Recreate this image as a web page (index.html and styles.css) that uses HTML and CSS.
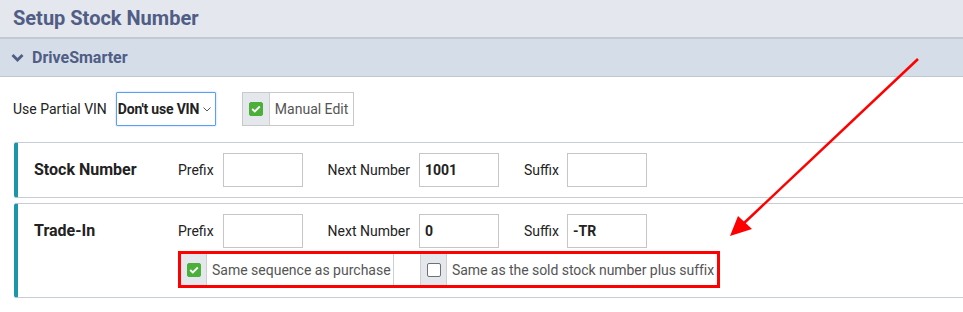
FILE: index.html
```html
<!DOCTYPE html>
<html>
<head>
<meta charset="utf-8">
<link rel="stylesheet" href="styles.css">
</head>
<body>
<div class="page">
  <div class="title">Setup Stock Number</div>
  <div class="section-head">
    <svg class="chev" width="13" height="10" viewBox="0 0 13 10"><path d="M0.5 3 L2.5 1 L6.5 5 L10.5 1 L12.5 3 L6.5 9 Z" fill="#505d85"/></svg>
    <span>DriveSmarter</span>
  </div>
  <div class="vin-row">
    <span class="lbl">Use Partial VIN</span>
    <div class="select">Don't use VIN <span class="caret"><svg width="8" height="5" viewBox="0 0 8 5"><path d="M0.5 0.5 L4 4 L7.5 0.5" fill="none" stroke="#555" stroke-width="1"/></svg></span></div>
    <div class="chk-group">
      <div class="addon"><span class="box checked"><svg width="10" height="8" viewBox="0 0 10 8"><path d="M1.2 4 L3.8 6.5 L8.8 1.5" fill="none" stroke="#fff" stroke-width="1.8"/></svg></span></div>
      <div class="chk-label">Manual Edit</div>
    </div>
  </div>
  <div class="card">
    <div class="card-title">Stock Number</div>
    <div class="fields">
      <div class="field-row">
        <span class="flbl">Prefix</span><div class="inp"></div>
        <span class="flbl nn">Next Number</span><div class="inp">1001</div>
        <span class="flbl sf">Suffix</span><div class="inp"></div>
      </div>
    </div>
  </div>
  <div class="card card2">
    <div class="card-title">Trade-In</div>
    <div class="fields">
      <div class="field-row">
        <span class="flbl">Prefix</span><div class="inp"></div>
        <span class="flbl nn">Next Number</span><div class="inp">0</div>
        <span class="flbl sf">Suffix</span><div class="inp">-TR</div>
      </div>
      <div class="opts">
        <div class="opt">
          <div class="addon"><span class="box checked"><svg width="10" height="8" viewBox="0 0 10 8"><path d="M1.2 4 L3.8 6.5 L8.8 1.5" fill="none" stroke="#fff" stroke-width="1.8"/></svg></span></div>
          <div class="chk-label wide1">Same sequence as purchase</div>
        </div>
        <div class="opt">
          <div class="addon"><span class="box"></span></div>
          <div class="chk-label last">Same as the sold stock number plus suffix</div>
        </div>
      </div>
    </div>
  </div>
  <div class="bottom-line"></div>
  <svg class="arrow" width="963" height="312" viewBox="0 0 963 312">
    <line x1="918" y1="59" x2="742" y2="225" stroke="#ff0000" stroke-width="2.5"/>
    <polygon points="730,236 738,216 752,229" fill="#ff0000"/>
  </svg>
</div>
</body>
</html>
```
FILE: styles.css
```css
* { box-sizing: border-box; }
html, body { margin: 0; padding: 0; background: #fff; }
body { font-family: Roboto, "Liberation Sans", Arial, sans-serif; color: #333; }
.page { position: relative; width: 963px; height: 312px; overflow: hidden; }
.title {
  height: 39px; background: #e4e7ed; border-bottom: 2px solid #c3c9d3;
  color: #505d85; font-weight: 700; font-size: 20px;
  padding: 6px 0 0 13px;
}
.section-head {
  height: 38px; background: #d5dde9; border-bottom: 1px solid #bfc6d1;
  display: flex; align-items: center; padding-left: 11px;
  color: #505d85; font-weight: 700; font-size: 16px;
}
.chev { margin-right: 8px; }
.vin-row {
  display: flex; align-items: center; padding: 15px 0 0 13px; height: 49px;
}
.lbl { font-size: 14px; color: #222; margin-right: 9px; white-space: nowrap; }
.select {
  width: 100px; height: 34px; border: 1px solid #5aa0f0; border-radius: 1px;
  box-shadow: 0 0 2px rgba(80,150,240,0.5);
  display: flex; align-items: center; padding-left: 1px;
  font-size: 14px; font-weight: 700; color: #222; white-space: nowrap; letter-spacing: -0.2px;
}
.caret { display: flex; margin-left: 4px; margin-top: 1px; }
.chk-group { display: flex; height: 34px; margin-left: 26px; border: 1px solid #c8c8c8; }
.addon {
  width: 27px; flex: none; background: #e4e7ec; border-right: 1px solid #cfcfcf;
  display: flex; align-items: center; justify-content: center;
}
.box {
  width: 14px; height: 14px; border-radius: 2px; border: 1.5px solid #6e7078; background: #fff;
  display: flex; align-items: center; justify-content: center;
}
.box.checked { background: #4caf3a; border-color: #4caf3a; }
.chk-label { display: flex; align-items: center; padding: 0 5px; font-size: 14px; color: #555; white-space: nowrap; }
.chk-label.last { padding-right: 0; letter-spacing: -0.05px; }
.card {
  margin: 16px 0 0 14px; border-top: 1px solid #c8cdd5; border-bottom: 1px solid #c8cdd5;
  border-left: 4px solid #1b97a9; border-radius: 3px 0 0 3px;
  display: flex; height: 56px; padding-top: 10px;
}
.card2 { margin-top: 5px; height: 95px; }
.card-title { width: 160px; flex: none; padding-left: 16px; font-size: 16px; font-weight: 700; color: #222; line-height: 34px; }
.fields { display: flex; flex-direction: column; }
.field-row { display: flex; align-items: center; height: 34px; }
.flbl { font-size: 14px; color: #222; margin-right: 9px; white-space: nowrap; }
.flbl.nn { margin-left: 25px; margin-right: 9px; }
.flbl.sf { margin-left: 25px; margin-right: 8px; }
.inp {
  width: 80px; flex: none; height: 34px; border: 1px solid #c6c6c6; font-size: 14px; font-weight: 700;
  display: flex; align-items: center; padding-left: 5px; color: #222;
}
.opts {
  display: flex; margin-top: 3px; width: 542px; height: 37px;
  border: 3px solid #ff0000; padding: 0; overflow: hidden;
}
.opt { display: flex; height: 31px; border-right: 1px solid #cfcfcf; }
.opt .addon { width: 26px; }
.wide1 { width: 187px; border-right: 1px solid #cfcfcf; }
.opt:first-child { width: 240px; flex: none; }
.opt:last-child { border-right: none; }
.bottom-line { margin-top: 14px; border-top: 1px solid #c8cdd5; }
.arrow { position: absolute; left: 0; top: 0; pointer-events: none; }
```
